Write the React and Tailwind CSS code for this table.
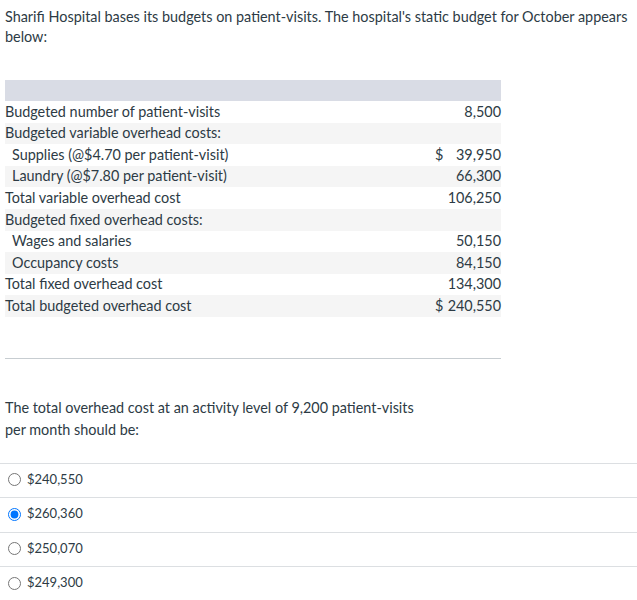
const rows = [
  { label: "Budgeted number of patient-visits", value: "8,500" },
  { label: "Budgeted variable overhead costs:", value: "" },
  { label: "Supplies (@$4.70 per patient-visit)", value: "39,950", dollar: true, indent: true },
  { label: "Laundry (@$7.80 per patient-visit)", value: "66,300", indent: true },
  { label: "Total variable overhead cost", value: "106,250" },
  { label: "Budgeted fixed overhead costs:", value: "" },
  { label: "Wages and salaries", value: "50,150", indent: true },
  { label: "Occupancy costs", value: "84,150", indent: true },
  { label: "Total fixed overhead cost", value: "134,300" },
  { label: "Total budgeted overhead cost", value: "240,550", dollar: true },
];

const options = ["$240,550", "$260,360", "$250,070", "$249,300"];

export default function App() {
  return (
    <div className="bg-white text-[#2d3b45] font-['Lato','Liberation_Sans',sans-serif] text-[14.4px]">
      <p className="px-[5px] pt-[7px] leading-[20px]">
        Sharifi Hospital bases its budgets on patient-visits. The hospital's static budget for October appears
        below:
      </p>

      <div className="mt-[33px] ml-[5px] w-[496px]">
        <div className="h-[21px] bg-[#d9dce5]" />
        {rows.map((r, i) => (
          <div
            key={i}
            className={`flex h-[21.6px] items-center justify-between leading-none ${i % 2 === 1 ? "bg-[#f5f5f5]" : "bg-white"}`}
          >
            <span className={r.indent ? "pl-[7px]" : ""}>{r.label}</span>
            <span className="flex w-[66px] justify-between">
              <span>{r.dollar ? "$" : ""}</span>
              <span>{r.value}</span>
            </span>
          </div>
        ))}
        <div className="mt-[41px] border-t border-[#c7cdd1]" />
      </div>

      <p className="mt-[38px] px-[5px] leading-[22px]">
        The total overhead cost at an activity level of 9,200 patient-visits
        <br />
        per month should be:
      </p>

      <div className="mt-[22px]">
        {options.map((o, i) => (
          <label key={o} className="flex h-[34.5px] items-center gap-[6px] border-t border-[#dcdfe2] pl-[8px] pb-[2px] text-[13px]">
            <input type="radio" name="ans" defaultChecked={i === 1} className="m-0 h-[13px] w-[13px]" />
            <span>{o}</span>
          </label>
        ))}
      </div>
    </div>
  );
}
